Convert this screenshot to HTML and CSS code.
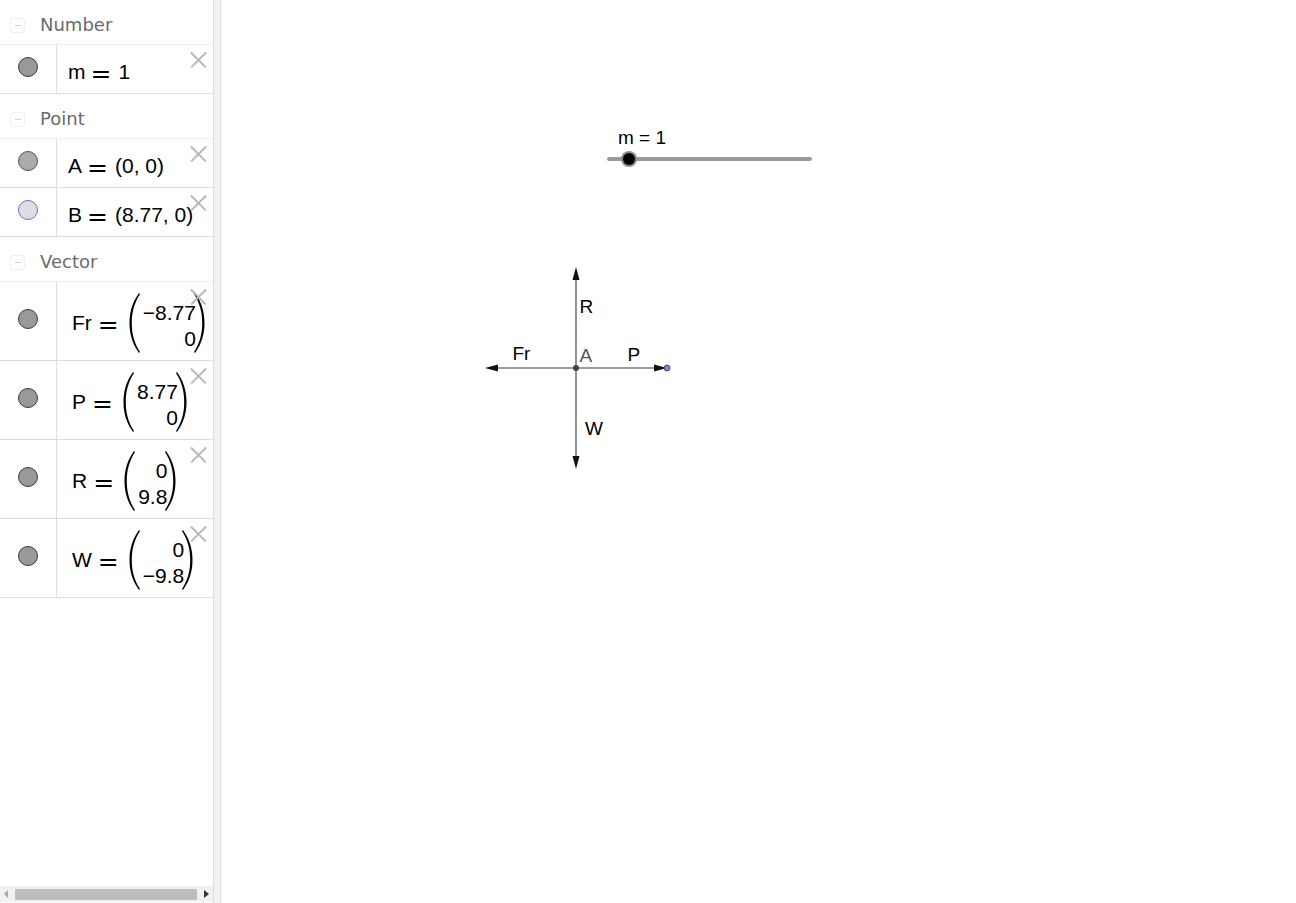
FILE: index.html
```html
<!DOCTYPE html>
<html>
<head>
<meta charset="utf-8">
<link rel="stylesheet" href="styles.css">
</head>
<body>
<div class="app">
  <aside class="algebra">
    <div class="list">
      <div class="group-head"><span class="toggle"></span><span class="group-title">Number</span></div>
      <div class="item">
        <div class="marble-cell"><span class="marble"></span></div>
        <div class="formula simple"><span class="nm">m</span><span class="eq">=</span><span>1</span></div>
        <span class="close"></span>
      </div>

      <div class="group-head"><span class="toggle"></span><span class="group-title">Point</span></div>
      <div class="item">
        <div class="marble-cell"><span class="marble pa"></span></div>
        <div class="formula simple"><span class="nm">A</span><span class="eq">=</span><span>(0, 0)</span></div>
        <span class="close"></span>
      </div>
      <div class="item">
        <div class="marble-cell"><span class="marble pb"></span></div>
        <div class="formula simple"><span class="nm">B</span><span class="eq">=</span><span>(8.77, 0)</span></div>
        <span class="close"></span>
      </div>

      <div class="group-head"><span class="toggle"></span><span class="group-title">Vector</span></div>
      <div class="item tall">
        <div class="marble-cell"><span class="marble"></span></div>
        <div class="formula matrix-f"><span class="nm">Fr</span><span class="eq">=</span>
          <span class="matrix">
            <svg class="paren" viewBox="0 0 12 62" preserveAspectRatio="none"><path d="M11,0 C4,10 1.5,20 1.5,31 C1.5,42 4,52 11,62 L12,61 C6,51 3.8,42 3.8,31 C3.8,20 6,11 12,1 Z"/></svg>
            <span class="cells"><span>&minus;8.77</span><span>0</span></span>
            <svg class="paren right" viewBox="0 0 12 62" preserveAspectRatio="none"><path d="M1,0 C8,10 10.5,20 10.5,31 C10.5,42 8,52 1,62 L0,61 C6,51 8.2,42 8.2,31 C8.2,20 6,11 0,1 Z"/></svg>
          </span>
        </div>
        <span class="close"></span>
      </div>
      <div class="item tall">
        <div class="marble-cell"><span class="marble"></span></div>
        <div class="formula matrix-f"><span class="nm">P</span><span class="eq">=</span>
          <span class="matrix">
            <svg class="paren" viewBox="0 0 12 62" preserveAspectRatio="none"><path d="M11,0 C4,10 1.5,20 1.5,31 C1.5,42 4,52 11,62 L12,61 C6,51 3.8,42 3.8,31 C3.8,20 6,11 12,1 Z"/></svg>
            <span class="cells"><span>8.77</span><span>0</span></span>
            <svg class="paren right" viewBox="0 0 12 62" preserveAspectRatio="none"><path d="M1,0 C8,10 10.5,20 10.5,31 C10.5,42 8,52 1,62 L0,61 C6,51 8.2,42 8.2,31 C8.2,20 6,11 0,1 Z"/></svg>
          </span>
        </div>
        <span class="close"></span>
      </div>
      <div class="item tall">
        <div class="marble-cell"><span class="marble"></span></div>
        <div class="formula matrix-f"><span class="nm">R</span><span class="eq">=</span>
          <span class="matrix">
            <svg class="paren" viewBox="0 0 12 62" preserveAspectRatio="none"><path d="M11,0 C4,10 1.5,20 1.5,31 C1.5,42 4,52 11,62 L12,61 C6,51 3.8,42 3.8,31 C3.8,20 6,11 12,1 Z"/></svg>
            <span class="cells"><span>0</span><span>9.8</span></span>
            <svg class="paren right" viewBox="0 0 12 62" preserveAspectRatio="none"><path d="M1,0 C8,10 10.5,20 10.5,31 C10.5,42 8,52 1,62 L0,61 C6,51 8.2,42 8.2,31 C8.2,20 6,11 0,1 Z"/></svg>
          </span>
        </div>
        <span class="close"></span>
      </div>
      <div class="item tall">
        <div class="marble-cell"><span class="marble"></span></div>
        <div class="formula matrix-f"><span class="nm">W</span><span class="eq">=</span>
          <span class="matrix">
            <svg class="paren" viewBox="0 0 12 62" preserveAspectRatio="none"><path d="M11,0 C4,10 1.5,20 1.5,31 C1.5,42 4,52 11,62 L12,61 C6,51 3.8,42 3.8,31 C3.8,20 6,11 12,1 Z"/></svg>
            <span class="cells"><span>0</span><span>&minus;9.8</span></span>
            <svg class="paren right" viewBox="0 0 12 62" preserveAspectRatio="none"><path d="M1,0 C8,10 10.5,20 10.5,31 C10.5,42 8,52 1,62 L0,61 C6,51 8.2,42 8.2,31 C8.2,20 6,11 0,1 Z"/></svg>
          </span>
        </div>
        <span class="close"></span>
      </div>
    </div>
    <div class="hscroll">
      <span class="arrow-l"></span>
      <span class="thumb"></span>
      <span class="arrow-r"></span>
    </div>
  </aside>
  <div class="splitter"></div>
  <main class="canvas">
    <svg class="graphics" viewBox="221 0 1075 903" width="1075" height="903">
      <text x="618" y="144" class="lbl">m = 1</text>
      <line x1="609" y1="159" x2="810" y2="159" class="track"/>
      <circle cx="629" cy="159" r="8" fill="#8a8a8a"/>
      <circle cx="629" cy="159" r="6" fill="#000"/>

      <g class="vec">
        <line x1="576" y1="368" x2="576" y2="279"/>
        <line x1="576" y1="368" x2="576" y2="458"/>
        <line x1="576" y1="368" x2="496" y2="368"/>
        <line x1="576" y1="368" x2="656" y2="368"/>
      </g>
      <g class="head">
        <polygon points="576,267 572.5,280 579.5,280"/>
        <polygon points="576,469 572.5,456 579.5,456"/>
        <polygon points="485,368 498,364.5 498,371.5"/>
        <polygon points="667,368 654,364.5 654,371.5"/>
      </g>
      <circle cx="576" cy="368" r="3" fill="#444"/>
      <circle cx="667" cy="368" r="3" fill="#8080e6" stroke="#333" stroke-width="0.8"/>

      <text x="579.5" y="313" class="lbl">R</text>
      <text x="512.5" y="360" class="lbl">Fr</text>
      <text x="579.5" y="362" class="lbl ptl">A</text>
      <text x="627.5" y="361" class="lbl">P</text>
      <text x="585" y="435" class="lbl">W</text>
    </svg>
  </main>
</div>
</body>
</html>
```

FILE: styles.css
```css
* { box-sizing: border-box; }
html, body { margin: 0; padding: 0; background: #fff; }
body { width: 1296px; height: 903px; overflow: hidden; font-family: "Liberation Sans", Arial, sans-serif; }

.app { display: flex; width: 1296px; height: 903px; }

.algebra {
  width: 214px;
  height: 903px;
  border-right: 1px solid #dcdcdc;
  display: flex;
  flex-direction: column;
}
.list { flex: 1; }

.group-head {
  height: 45px;
  border-bottom: 1px dotted #e2e2e2;
  display: flex;
  align-items: center;
  padding-left: 10px;
}
.toggle {
  width: 15px;
  height: 15px;
  border: 1px solid #efefef;
  border-radius: 3px;
  position: relative;
  margin-right: 15px;
  margin-top: 6px;
}
.toggle::after {
  content: "";
  position: absolute;
  left: 4px;
  top: 6px;
  width: 6px;
  height: 1px;
  background: #d2d2d2;
}
.group-title {
  font-family: "DejaVu Sans", sans-serif;
  font-size: 18px;
  color: #6a6a6a;
  margin-top: 5px;
}

.item {
  height: 49px;
  border-bottom: 1px solid #dedede;
  display: flex;
  position: relative;
}
.item.tall { height: 79px; }

.marble-cell {
  width: 57px;
  border-right: 1px solid #dedede;
  display: flex;
  align-items: center;
  justify-content: center;
  flex: none;
}
.marble {
  width: 20px;
  height: 20px;
  border-radius: 50%;
  background: #999;
  border: 1px solid #3a3a3a;
  margin-bottom: 4px;
  margin-left: -1px;
}
.marble.pa { background: #ababab; border-color: #555; }
.marble.pb { background: #dedee2; border-color: #6a6ae0; }

.formula {
  display: flex;
  align-items: center;
  font-size: 21px;
  color: #000;
  white-space: nowrap;
}
.formula.simple { padding-left: 11px; padding-top: 5px; }
.formula.matrix-f { padding-left: 15px; padding-top: 3px; }
.eq {
  font-family: "DejaVu Sans", sans-serif;
  font-size: 25px;
  line-height: 24px;
  margin: 4px 7px 0 5px;
  color: #000;
}
.matrix-f .eq { margin: 4px 9px 0 6px; }

.matrix { display: flex; align-items: center; height: 62px; }
.paren { width: 12px; height: 60px; flex: none; }
.paren path { fill: #000; }
.paren.right { margin-left: -2px; }
.cells {
  display: flex;
  flex-direction: column;
  align-items: flex-end;
  font-size: 21px;
  line-height: 26px;
  padding-left: 3px;
  padding-top: 7px;
}

.close {
  position: absolute;
  left: 190px;
  top: 6px;
  width: 17px;
  height: 17px;
}
.close::before, .close::after {
  content: "";
  position: absolute;
  left: -2px;
  top: 8px;
  width: 21px;
  height: 1.5px;
  background: #b8b8b8;
  transform: rotate(45deg);
}
.close::after { transform: rotate(-45deg); }

.hscroll {
  height: 16px;
  margin-bottom: 1px;
  background: #f1f1f1;
  display: flex;
  align-items: center;
  padding: 0 3px 0 4px;
}
.arrow-l {
  width: 0; height: 0;
  border-top: 4px solid transparent;
  border-bottom: 4px solid transparent;
  border-right: 4px solid #a8a8a8;
  margin-right: 7px;
}
.thumb {
  height: 11px;
  width: 182px;
  background: #bdbdbd;
  margin-top: 1px;
}
.arrow-r {
  width: 0; height: 0;
  border-top: 4px solid transparent;
  border-bottom: 4px solid transparent;
  border-left: 5px solid #333;
  margin-left: 7px;
}

.splitter {
  width: 7px;
  height: 903px;
  background: #f2f2f2;
  border-right: 1px solid #dcdcdc;
  flex: none;
}

.canvas { flex: 1; height: 903px; }
.graphics { display: block; }
.lbl { font-family: "Liberation Sans", Arial, sans-serif; font-size: 19px; fill: #000; }
.ptl { fill: #555; }
.track { stroke: #9a9a9a; stroke-width: 4; stroke-linecap: round; }
.vec line { stroke: #3a3a3a; stroke-width: 1.1; }
.head polygon { fill: #111; }
```
